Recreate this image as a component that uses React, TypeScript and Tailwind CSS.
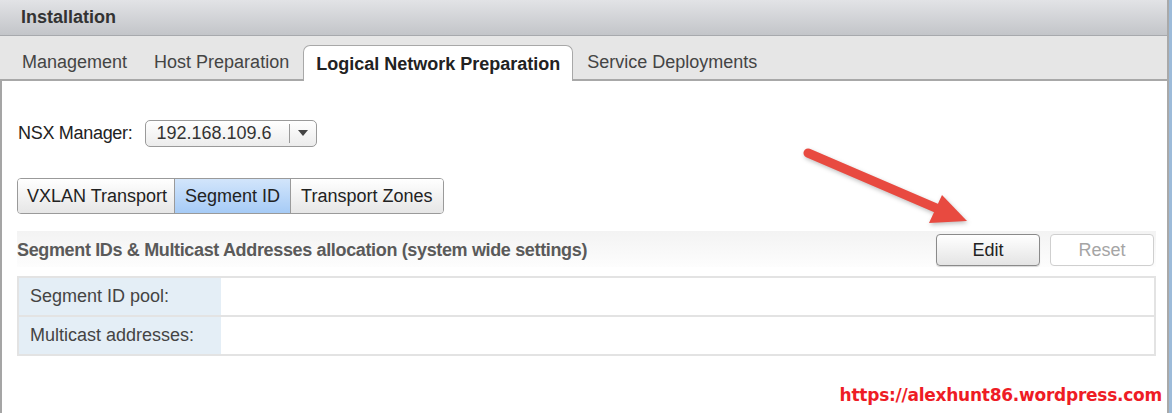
const tabs = ["Management", "Host Preparation"];

const Arrow = () => (
  <svg
    className="pointer-events-none absolute left-0 top-0 drop-shadow-[1px_2px_2px_rgba(0,0,0,0.25)]"
    width="1172"
    height="413"
    viewBox="0 0 1172 413"
  >
    <line x1="808" y1="153" x2="936" y2="208" stroke="#e84a40" strokeWidth="9" strokeLinecap="round" />
    <polygon points="942,195 929,223 967,221" fill="#e84a40" />
  </svg>
);

export default function App() {
  return (
    <div className="relative flex h-[413px] w-[1172px] overflow-hidden bg-white font-['Liberation_Sans',Arial,sans-serif] text-[18px] text-[#333]">
      <div className="flex flex-1 flex-col border-r-2 border-[#a9a9a9]">
        {/* title bar */}
        <div className="flex h-[36px] items-center border-b border-[#a7a9ad] bg-gradient-to-b from-[#e2e3e6] to-[#c3c5c9] pl-[21px] font-bold text-[#333]">
          Installation
        </div>

        {/* tabs */}
        <div className="flex h-[45px] items-end gap-[1px] border-b-2 border-[#a8a8a8] bg-[#e6e6e6] pl-[9px]">
          {tabs.map((t) => (
            <div key={t} className="flex h-[34px] items-center px-[13px] text-[#444]">
              {t}
            </div>
          ))}
          <div className="-mb-[2px] flex h-[36px] items-center rounded-t-[7px] border border-b-0 border-[#a8a8a8] bg-white px-[12px] pt-[2px] font-bold text-[#222]">
            Logical Network Preparation
          </div>
          <div className="flex h-[34px] items-center px-[13px] text-[#444]">Service Deployments</div>
        </div>

        {/* content */}
        <div className="flex flex-1 flex-col border-l-2 border-[#a5a5a5] pl-[15px] pr-[11px]">
          <div className="mt-[38px] flex h-[28px] items-center gap-[13px]">
            <span className="pl-[1px] tracking-[-0.3px] text-[#222]">NSX Manager:</span>
            <div className="flex h-[27px] w-[172px] items-center rounded-[5px] border border-[#9a9a9a] bg-gradient-to-b from-white to-[#ececec]">
              <span className="flex-1 pl-[10px] text-[#333]">192.168.109.6</span>
              <div className="flex h-[19px] w-[27px] items-center justify-center border-l border-[#9a9a9a]">
                <svg width="10" height="6" viewBox="0 0 10 6">
                  <polygon points="0,0 10,0 5,6" fill="#444" />
                </svg>
              </div>
            </div>
          </div>

          <div className="mt-[31px] flex h-[36px] w-fit overflow-hidden rounded-[4px] border border-[#9a9a9a]">
            <div className="flex items-center bg-gradient-to-b from-white to-[#e6e6e6] pl-[9px] pr-[7px] text-[#222]">VXLAN Transport</div>
            <div className="flex items-center border-x border-[#9a9a9a] bg-gradient-to-b from-[#d2e5fb] to-[#a6cbf6] px-[10px] text-[#222]">
              Segment ID
            </div>
            <div className="flex items-center bg-gradient-to-b from-white to-[#e6e6e6] px-[10px] text-[#222]">Transport Zones</div>
          </div>

          <div className="mt-[17px] flex h-[36px] items-center bg-gradient-to-b from-[#f3f3f3] to-[#fdfdfd] pr-[2px] pt-[2px]">
            <span className="flex-1 font-bold tracking-[-0.35px] text-[#5a5a5a]">
              Segment IDs &amp; Multicast Addresses allocation (system wide settings)
            </span>
            <button className="flex h-[32px] w-[104px] items-center justify-center rounded-[4px] border border-[#8a8a8a] bg-gradient-to-b from-white to-[#e4e4e4] text-[#222] shadow-[0_1px_1px_rgba(0,0,0,0.15)]">
              Edit
            </button>
            <button className="ml-[10px] flex h-[32px] w-[104px] items-center justify-center rounded-[4px] border border-[#cfcfcf] bg-white text-[#a5a5a5]">
              Reset
            </button>
          </div>

          <div className="mt-[9px] flex flex-col gap-[2px] border-2 border-[#e3e3e3] bg-[#e3e3e3]">
            <div className="flex h-[37px]">
              <div className="flex w-[202px] items-center bg-[#e4eef6] pl-[11px] text-[#444]">Segment ID pool:</div>
              <div className="flex-1 bg-white" />
            </div>
            <div className="flex h-[37px]">
              <div className="flex w-[202px] items-center bg-[#e4eef6] pl-[11px] text-[#444]">Multicast addresses:</div>
              <div className="flex-1 bg-white" />
            </div>
          </div>

          <div className="-mr-[6px] mt-[27px] flex justify-end font-['DejaVu_Sans',Verdana,sans-serif] text-[17px] font-bold tracking-[-0.25px] text-[#ee1c25]">
            https://alexhunt86.wordpress.com
          </div>
        </div>
      </div>
      <div className="w-[3px] bg-[#9dbbd9]" />
      <Arrow />
    </div>
  );
}
